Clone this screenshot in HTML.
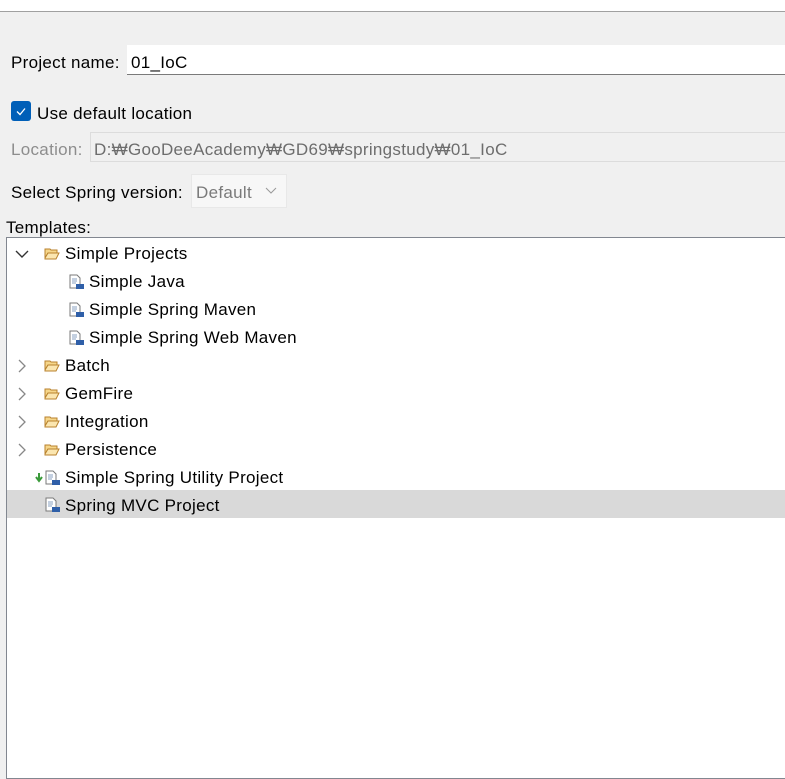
<!DOCTYPE html>
<html><head><style>
body{margin:0;width:785px;height:772px;background:#f0f0f0;font-family:"Liberation Sans","Noto Sans CJK KR",sans-serif;font-size:17px;color:#000;position:relative;overflow:hidden;letter-spacing:0.3px}
.a{position:absolute;white-space:nowrap}
.row{position:absolute;left:0;height:28px;line-height:28px;width:780px}
.fold{display:inline-block;position:absolute;top:7px;width:16px;height:13px}
.file{position:absolute;top:6px;width:16px;height:16px}
.chev{position:absolute;top:8px}
</style></head><body>
<div class="a" style="left:0;top:0;width:785px;height:11px;background:#fff;border-bottom:1px solid #a0a0a0"></div>
<div class="a" style="left:11px;top:53px">Project name:</div>
<div class="a" style="left:127px;top:45px;width:660px;height:29px;background:#fff;border-bottom:1px solid #7a7a7a"></div>
<div class="a" style="left:131px;top:53px">01_IoC</div>
<div class="a" style="left:11px;top:101px;width:20px;height:20px;background:#005fb8;border-radius:3px"><svg width="20" height="20"><path d="M6 10.5l3 3 5-6" stroke="#fff" stroke-width="1.3" fill="none"/></svg></div>
<div class="a" style="left:37px;top:104px">Use default location</div>
<div class="a" style="left:11px;top:140px;color:#8d8d8d">Location:</div>
<div class="a" style="left:90px;top:132px;width:700px;height:28px;background:#f0f0f0;border:1px solid #dcdcdc"></div>
<div class="a" style="left:94px;top:140px;color:#6d6d6d">D:₩GooDeeAcademy₩GD69₩springstudy₩01_IoC</div>
<div class="a" style="left:11px;top:183px">Select Spring version:</div>
<div class="a" style="left:191px;top:174px;width:94px;height:32px;background:#f7f7f7;border:1px solid #e8e8e8"></div>
<div class="a" style="left:196px;top:183px;color:#7a7a7a">Default</div>
<svg class="a" style="left:265px;top:187px" width="12" height="8"><path d="M1 1l5 5 5-5" stroke="#999" fill="none"/></svg>
<div class="a" style="left:6px;top:218px">Templates:</div>
<div class="a" style="left:6px;top:237px;width:790px;height:540px;background:#fff;border:1px solid #828790">
<div class="row" style="top:2px"><svg class="chev" style="left:8px;top:10px" width="14" height="9"><path d="M1 1l6 6 6-6" stroke="#333" stroke-width="1.4" fill="none"/></svg><svg class="fold" style="left:37px" viewBox="0 0 16 13"><path d="M1 2h5l1 1h6v3H4L1 11z" fill="#f6d68a" stroke="#b8822e"/><path d="M1 11l3-5h11l-3 6H1z" fill="#fbe6b0" stroke="#b8822e"/></svg><span class="a" style="left:58px">Simple Projects</span></div>
<div class="row" style="top:30px"><svg class="file" style="left:62px" viewBox="0 0 16 16"><path d="M1 1h7l3 3v10H1z" fill="#fff" stroke="#7a7a7a"/><path d="M3 5h5M3 7h5M3 9h4" stroke="#8aa0c0"/><rect x="7" y="10" width="8" height="5" fill="#2f5fa8"/></svg><span class="a" style="left:82px">Simple Java</span></div>
<div class="row" style="top:58px"><svg class="file" style="left:62px" viewBox="0 0 16 16"><path d="M1 1h7l3 3v10H1z" fill="#fff" stroke="#7a7a7a"/><path d="M3 5h5M3 7h5M3 9h4" stroke="#8aa0c0"/><rect x="7" y="10" width="8" height="5" fill="#2f5fa8"/></svg><span class="a" style="left:82px">Simple Spring Maven</span></div>
<div class="row" style="top:86px"><svg class="file" style="left:62px" viewBox="0 0 16 16"><path d="M1 1h7l3 3v10H1z" fill="#fff" stroke="#7a7a7a"/><path d="M3 5h5M3 7h5M3 9h4" stroke="#8aa0c0"/><rect x="7" y="10" width="8" height="5" fill="#2f5fa8"/></svg><span class="a" style="left:82px">Simple Spring Web Maven</span></div>
<div class="row" style="top:114px"><svg class="chev" style="left:11px;top:7px" width="9" height="14"><path d="M1 1l6 6-6 6" stroke="#888" stroke-width="1.3" fill="none"/></svg><svg class="fold" style="left:37px" viewBox="0 0 16 13"><path d="M1 2h5l1 1h6v3H4L1 11z" fill="#f6d68a" stroke="#b8822e"/><path d="M1 11l3-5h11l-3 6H1z" fill="#fbe6b0" stroke="#b8822e"/></svg><span class="a" style="left:58px">Batch</span></div>
<div class="row" style="top:142px"><svg class="chev" style="left:11px;top:7px" width="9" height="14"><path d="M1 1l6 6-6 6" stroke="#888" stroke-width="1.3" fill="none"/></svg><svg class="fold" style="left:37px" viewBox="0 0 16 13"><path d="M1 2h5l1 1h6v3H4L1 11z" fill="#f6d68a" stroke="#b8822e"/><path d="M1 11l3-5h11l-3 6H1z" fill="#fbe6b0" stroke="#b8822e"/></svg><span class="a" style="left:58px">GemFire</span></div>
<div class="row" style="top:170px"><svg class="chev" style="left:11px;top:7px" width="9" height="14"><path d="M1 1l6 6-6 6" stroke="#888" stroke-width="1.3" fill="none"/></svg><svg class="fold" style="left:37px" viewBox="0 0 16 13"><path d="M1 2h5l1 1h6v3H4L1 11z" fill="#f6d68a" stroke="#b8822e"/><path d="M1 11l3-5h11l-3 6H1z" fill="#fbe6b0" stroke="#b8822e"/></svg><span class="a" style="left:58px">Integration</span></div>
<div class="row" style="top:198px"><svg class="chev" style="left:11px;top:7px" width="9" height="14"><path d="M1 1l6 6-6 6" stroke="#888" stroke-width="1.3" fill="none"/></svg><svg class="fold" style="left:37px" viewBox="0 0 16 13"><path d="M1 2h5l1 1h6v3H4L1 11z" fill="#f6d68a" stroke="#b8822e"/><path d="M1 11l3-5h11l-3 6H1z" fill="#fbe6b0" stroke="#b8822e"/></svg><span class="a" style="left:58px">Persistence</span></div>
<div class="row" style="top:226px"><svg class="file" style="left:28px;top:9px" width="8" height="10"><path d="M4 0v7M1 4l3 4 3-4" stroke="#3a9a3a" stroke-width="2" fill="none"/></svg><svg class="file" style="left:38px" viewBox="0 0 16 16"><path d="M1 1h7l3 3v10H1z" fill="#fff" stroke="#7a7a7a"/><path d="M3 5h5M3 7h5M3 9h4" stroke="#8aa0c0"/><rect x="7" y="10" width="8" height="5" fill="#2f5fa8"/></svg><span class="a" style="left:58px">Simple Spring Utility Project</span></div>
<div class="row" style="top:252px;background:#d9d9d9"><svg class="file" style="left:38px;top:7px" viewBox="0 0 16 16"><path d="M1 1h7l3 3v10H1z" fill="#fff" stroke="#7a7a7a"/><path d="M3 5h5M3 7h5M3 9h4" stroke="#8aa0c0"/><rect x="7" y="10" width="8" height="5" fill="#2f5fa8"/></svg><span class="a" style="left:58px;top:2px">Spring MVC Project</span></div>
</div>
</body></html>
